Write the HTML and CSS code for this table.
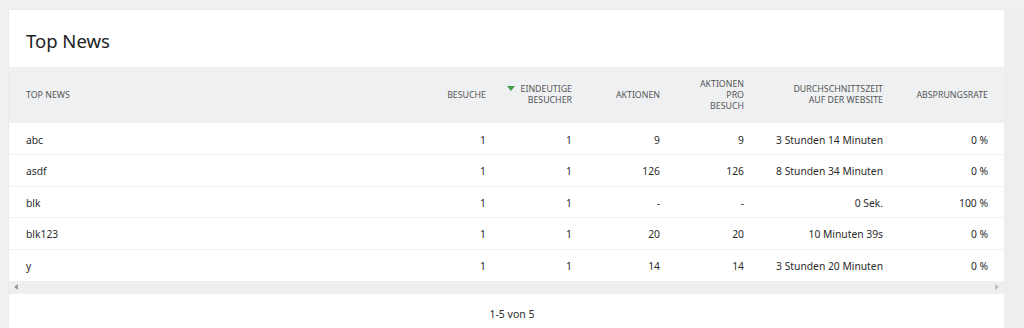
FILE: index.html
```html
<!DOCTYPE html>
<html lang="de">
<head>
<meta charset="utf-8">
<title>Top News</title>
<link rel="stylesheet" href="styles.css">
</head>
<body>
<div class="page">
  <section class="card">
    <h2 class="card-title">Top News</h2>
    <div class="table-wrap">
      <table class="data">
        <colgroup>
          <col class="c-label"><col class="c-visits"><col class="c-uniq"><col class="c-act"><col class="c-apv"><col class="c-time"><col class="c-bounce">
        </colgroup>
        <thead>
          <tr>
            <th class="left">TOP NEWS</th>
            <th>BESUCHE</th>
            <th><span class="sort"></span>EINDEUTIGE<br>BESUCHER</th>
            <th>AKTIONEN</th>
            <th>AKTIONEN<br>PRO<br>BESUCH</th>
            <th>DURCHSCHNITTSZEIT<br>AUF DER WEBSITE</th>
            <th>ABSPRUNGSRATE</th>
          </tr>
        </thead>
        <tbody>
          <tr><td class="left">abc</td><td>1</td><td>1</td><td>9</td><td>9</td><td>3 Stunden 14 Minuten</td><td>0 %</td></tr>
          <tr><td class="left">asdf</td><td>1</td><td>1</td><td>126</td><td>126</td><td>8 Stunden 34 Minuten</td><td>0 %</td></tr>
          <tr><td class="left">blk</td><td>1</td><td>1</td><td>-</td><td>-</td><td>0 Sek.</td><td>100 %</td></tr>
          <tr><td class="left">blk123</td><td>1</td><td>1</td><td>20</td><td>20</td><td>10 Minuten 39s</td><td>0 %</td></tr>
          <tr><td class="left">y</td><td>1</td><td>1</td><td>14</td><td>14</td><td>3 Stunden 20 Minuten</td><td>0 %</td></tr>
        </tbody>
      </table>
      <div class="hscroll">
        <span class="arrow arrow-left"></span>
        <span class="arrow arrow-right"></span>
      </div>
    </div>
    <div class="pager">1-5 von 5</div>
  </section>
  <div class="side"></div>
</div>
</body>
</html>
```
FILE: styles.css
```css
* { box-sizing: border-box; }
html, body { margin: 0; padding: 0; }
body {
  background: #eef0f2;
  font-family: "Noto Sans", "Open Sans", sans-serif;
  color: #333;
  overflow: hidden;
}
.page {
  display: flex;
  padding: 10px 0 0 9px;
  height: 328px;
}
.card {
  width: 995px;
  flex: none;
  background: #fff;
  box-shadow: 0 0 2px rgba(0,0,0,0.08);
}
.side {
  flex: 1;
  background: #eceef0;
}
.card-title {
  margin: 0;
  height: 57px;
  padding: 19px 0 0 17px;
  font-size: 18.5px;
  font-weight: 400;
  line-height: 24px;
  color: #222;
}
.data {
  width: 100%;
  border-collapse: collapse;
  table-layout: fixed;
}
.c-label { width: 411px; }
.c-visits { width: 82px; }
.c-uniq { width: 86px; }
.c-act { width: 88px; }
.c-apv { width: 84px; }
.c-time { width: 139px; }
.c-bounce { width: 105px; }
.data thead tr { height: 56px; background: #eff0f2; }
.data th {
  font-size: 8.8px;
  font-weight: 400;
  color: #555;
  line-height: 11px;
  text-align: right;
  padding: 0 16px 0 0;
  vertical-align: middle;
  white-space: nowrap;
}
.data th.left, .data td.left { text-align: left; padding-left: 17px; }
.sort {
  display: inline-block;
  width: 0; height: 0;
  border-left: 4px solid transparent;
  border-right: 4px solid transparent;
  border-top: 5px solid #43a047;
  margin-right: 6px;
  vertical-align: 1px;
}
.data tbody tr { height: 31.5px; border-bottom: 1px solid #f0f0f0; }
.data tbody tr:last-child { border-bottom: none; }
.data td {
  font-size: 10.3px;
  text-align: right;
  padding: 2px 16px 0 0;
  vertical-align: middle;
  color: #2b2b2b;
  white-space: nowrap;
}
.hscroll {
  height: 13px;
  background: #efefef;
  display: flex;
  justify-content: space-between;
  align-items: center;
  padding: 0 5px;
}
.arrow { width: 0; height: 0; border-top: 3px solid transparent; border-bottom: 3px solid transparent; }
.arrow-left { border-right: 4px solid #999; }
.arrow-right { border-left: 4px solid #bbb; }
.pager {
  text-align: center;
  padding: 13px 0 0 11px;
  font-size: 10.5px;
  color: #2b2b2b;
}
```
